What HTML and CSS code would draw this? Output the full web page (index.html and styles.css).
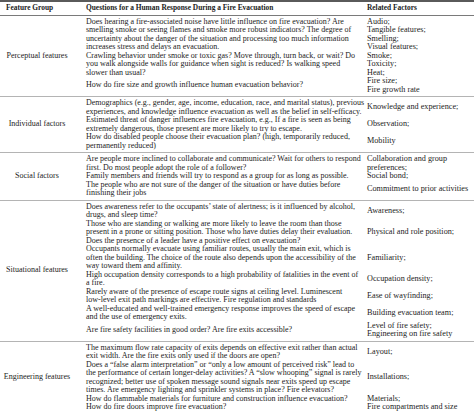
FILE: index.html
```html
<!DOCTYPE html>
<html>
<head>
<meta charset="utf-8">
<link rel="stylesheet" href="styles.css">
</head>
<body>
<div class="table">
  <div class="head">
    <div class="c1">Feature Group</div>
    <div class="c2">Questions for a Human Response During a Fire Evacuation</div>
    <div class="c3">Related Factors</div>
  </div>

  <div class="group">
    <div class="label">Perceptual features</div>
    <div class="rows">
      <div class="row">
        <div class="q">Does hearing a fire-associated noise have little influence on fire evacuation? Are<br>smelling smoke or seeing flames and smoke more robust indicators? The degree of<br>uncertainty about the danger of the situation and processing too much information<br>increases stress and delays an evacuation.</div>
        <div class="f">Audio;<br>Tangible features;<br>Smelling;<br>Visual features;</div>
      </div>
      <div class="row">
        <div class="q">Crawling behavior under smoke or toxic gas? Move through, turn back, or wait? Do<br>you walk alongside walls for guidance when sight is reduced? Is walking speed<br>slower than usual?</div>
        <div class="f">Smoke;<br>Toxicity;<br>Heat;</div>
      </div>
      <div class="row">
        <div class="q">How do fire size and growth influence human evacuation behavior?</div>
        <div class="f">Fire size;<br>Fire growth rate</div>
      </div>
    </div>
  </div>

  <div class="group">
    <div class="label">Individual factors</div>
    <div class="rows">
      <div class="row">
        <div class="q">Demographics (e.g., gender, age, income, education, race, and marital status), previous<br>experiences, and knowledge influence evacuation as well as the belief in self-efficacy.</div>
        <div class="f">Knowledge and experience;</div>
      </div>
      <div class="row">
        <div class="q">Estimated threat of danger influences fire evacuation, e.g., If a fire is seen as being<br>extremely dangerous, those present are more likely to try to escape.</div>
        <div class="f">Observation;</div>
      </div>
      <div class="row">
        <div class="q">How do disabled people choose their evacuation plan? (high, temporarily reduced,<br>permanently reduced)</div>
        <div class="f">Mobility</div>
      </div>
    </div>
  </div>

  <div class="group">
    <div class="label">Social factors</div>
    <div class="rows">
      <div class="row">
        <div class="q">Are people more inclined to collaborate and communicate? Wait for others to respond<br>first. Do most people adopt the role of a follower?</div>
        <div class="f">Collaboration and group<br>preferences;</div>
      </div>
      <div class="row">
        <div class="q">Family members and friends will try to respond as a group for as long as possible.</div>
        <div class="f">Social bond;</div>
      </div>
      <div class="row">
        <div class="q">The people who are not sure of the danger of the situation or have duties before<br>finishing their jobs</div>
        <div class="f">Commitment to prior activities</div>
      </div>
    </div>
  </div>

  <div class="group">
    <div class="label">Situational features</div>
    <div class="rows">
      <div class="row">
        <div class="q">Does awareness refer to the occupants’ state of alertness; is it influenced by alcohol,<br>drugs, and sleep time?</div>
        <div class="f">Awareness;</div>
      </div>
      <div class="row">
        <div class="q">Those who are standing or walking are more likely to leave the room than those<br>present in a prone or sitting position. Those who have duties delay their evaluation.<br>Does the presence of a leader have a positive effect on evacuation?</div>
        <div class="f">Physical and role position;</div>
      </div>
      <div class="row">
        <div class="q">Occupants normally evacuate using familiar routes, usually the main exit, which is<br>often the building. The choice of the route also depends upon the accessibility of the<br>way toward them and affinity.</div>
        <div class="f">Familiarity;</div>
      </div>
      <div class="row">
        <div class="q">High occupation density corresponds to a high probability of fatalities in the event of<br>a fire.</div>
        <div class="f">Occupation density;</div>
      </div>
      <div class="row">
        <div class="q">Rarely aware of the presence of escape route signs at ceiling level. Luminescent<br>low-level exit path markings are effective. Fire regulation and standards</div>
        <div class="f">Ease of wayfinding;</div>
      </div>
      <div class="row">
        <div class="q">A well-educated and well-trained emergency response improves the speed of escape<br>and the use of emergency exits.</div>
        <div class="f">Building evacuation team;</div>
      </div>
      <div class="row">
        <div class="q">Are fire safety facilities in good order? Are fire exits accessible?</div>
        <div class="f">Level of fire safety;<br>Engineering on fire safety</div>
      </div>
    </div>
  </div>

  <div class="group last">
    <div class="label">Engineering features</div>
    <div class="rows">
      <div class="row">
        <div class="q">The maximum flow rate capacity of exits depends on effective exit rather than actual<br>exit width. Are the fire exits only used if the doors are open?</div>
        <div class="f">Layout;</div>
      </div>
      <div class="row">
        <div class="q">Does a “false alarm interpretation” or “only a low amount of perceived risk” lead to<br>the performance of certain longer-delay activities? A “slow whooping” signal is rarely<br>recognized; better use of spoken message sound signals near exits speed up escape<br>times. Are emergency lighting and sprinkler systems in place? Fire elevators?</div>
        <div class="f">Installations;</div>
      </div>
      <div class="row">
        <div class="q">How do flammable materials for furniture and construction influence evacuation?</div>
        <div class="f">Materials;</div>
      </div>
      <div class="row">
        <div class="q">How do fire doors improve fire evacuation?</div>
        <div class="f">Fire compartments and size</div>
      </div>
    </div>
  </div>
</div>
</body>
</html>
```

FILE: styles.css
```css
html, body {
  margin: 0;
  padding: 0;
  background: #ffffff;
}

body {
  font-family: "Liberation Serif", "Times New Roman", serif;
  font-size: 8.2px;
  line-height: 8.5px;
  color: #1c1c1c;
  width: 474px;
  overflow: hidden;
}

.table {
  width: 474px;
  border-top: 2.5px solid #5a5a5a;
}

.head {
  display: flex;
  font-weight: bold;
  font-size: 7.4px;
  padding: 2px 0 2px;
  border-bottom: 1px solid #7a7a7a;
  white-space: nowrap;
}

.head .c1 {
  width: 74px;
  padding-left: 6px;
  box-sizing: border-box;
}

.head .c2 {
  width: 287px;
  padding-left: 12px;
  box-sizing: border-box;
}

.head .c3 {
  padding-left: 6px;
}

.group {
  display: flex;
  padding: 2px 0;
  border-bottom: 1.5px solid #b4b4b4;
}

.group.last {
  padding-bottom: 4px;
}

.label {
  width: 74px;
  flex: none;
  display: flex;
  align-items: center;
  justify-content: center;
  white-space: nowrap;
  font-size: 8px;
}

.rows {
  flex: 1;
  display: flex;
  flex-direction: column;
}

.row {
  display: flex;
  align-items: center;
}

.q {
  width: 287px;
  flex: none;
  box-sizing: border-box;
  padding-left: 12px;
  white-space: nowrap;
  font-size: 8px;
}

.f {
  padding-left: 6px;
  white-space: nowrap;
}
```
